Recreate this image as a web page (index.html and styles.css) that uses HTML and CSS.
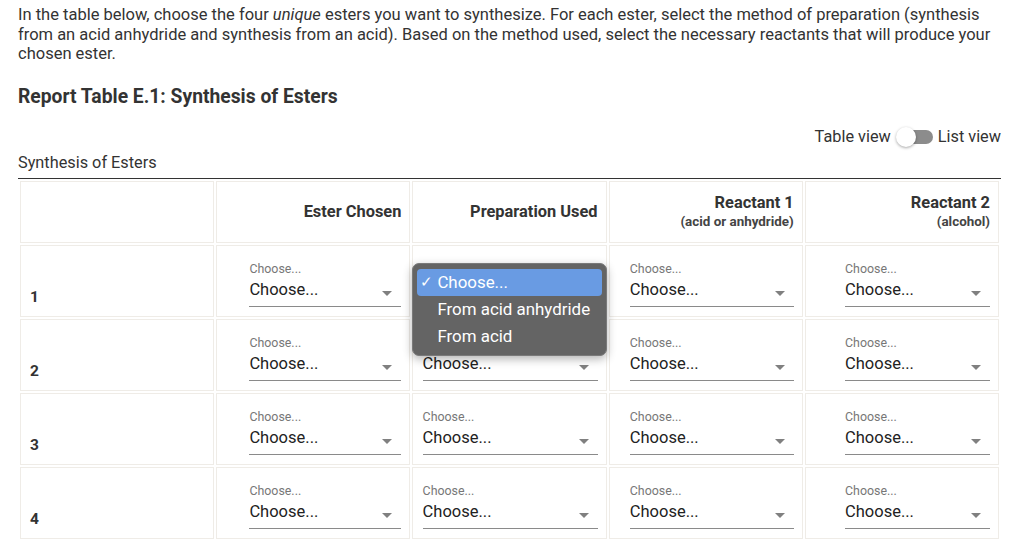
FILE: index.html
```html
<!DOCTYPE html>
<html lang="en">
<head>
    <meta charset="UTF-8">
    <meta name="viewport" content="width=device-width, initial-scale=1.0">
    <title>Synthesis of Esters</title>
    <link rel="stylesheet" href="styles.css">
</head>
<body>
    <div class="page">
        <p class="intro">
            In the table below, choose the four <em>unique</em> esters you want to synthesize. For each ester, select the method of preparation (synthesis
            from an acid anhydride and synthesis from an acid). Based on the method used, select the necessary reactants that will produce your
            chosen ester.
        </p>

        <h2 class="title">Report Table E.1: Synthesis of Esters</h2>

        <div class="view-toggle">
            <span>Table view</span>
            <span class="switch"><span class="knob"></span></span>
            <span>List view</span>
        </div>

        <div class="caption">Synthesis of Esters</div>

        <table class="esters">
            <thead>
                <tr>
                    <th></th>
                    <th>Ester Chosen</th>
                    <th>Preparation Used</th>
                    <th>Reactant 1<small>(acid or anhydride)</small></th>
                    <th>Reactant 2<small>(alcohol)</small></th>
                </tr>
            </thead>
            <tbody>
                <tr>
                    <td class="num">1</td>
                    <td><div class="pick w-ester"><span class="pick-label">Choose...</span><div class="pick-value">Choose...</div></div></td>
                    <td class="open">
                        <div class="pick w-prep"><span class="pick-label">Choose...</span><div class="pick-value">Choose...</div></div>
                        <ul class="menu">
                            <li class="active"><span class="tick">✓</span>Choose...</li>
                            <li>From acid anhydride</li>
                            <li>From acid</li>
                        </ul>
                    </td>
                    <td><div class="pick w-r1"><span class="pick-label">Choose...</span><div class="pick-value">Choose...</div></div></td>
                    <td><div class="pick w-r2"><span class="pick-label">Choose...</span><div class="pick-value">Choose...</div></div></td>
                </tr>
                <tr>
                    <td class="num">2</td>
                    <td><div class="pick w-ester"><span class="pick-label">Choose...</span><div class="pick-value">Choose...</div></div></td>
                    <td><div class="pick w-prep"><span class="pick-label">Choose...</span><div class="pick-value">Choose...</div></div></td>
                    <td><div class="pick w-r1"><span class="pick-label">Choose...</span><div class="pick-value">Choose...</div></div></td>
                    <td><div class="pick w-r2"><span class="pick-label">Choose...</span><div class="pick-value">Choose...</div></div></td>
                </tr>
                <tr>
                    <td class="num">3</td>
                    <td><div class="pick w-ester"><span class="pick-label">Choose...</span><div class="pick-value">Choose...</div></div></td>
                    <td><div class="pick w-prep"><span class="pick-label">Choose...</span><div class="pick-value">Choose...</div></div></td>
                    <td><div class="pick w-r1"><span class="pick-label">Choose...</span><div class="pick-value">Choose...</div></div></td>
                    <td><div class="pick w-r2"><span class="pick-label">Choose...</span><div class="pick-value">Choose...</div></div></td>
                </tr>
                <tr>
                    <td class="num">4</td>
                    <td><div class="pick w-ester"><span class="pick-label">Choose...</span><div class="pick-value">Choose...</div></div></td>
                    <td><div class="pick w-prep"><span class="pick-label">Choose...</span><div class="pick-value">Choose...</div></div></td>
                    <td><div class="pick w-r1"><span class="pick-label">Choose...</span><div class="pick-value">Choose...</div></div></td>
                    <td><div class="pick w-r2"><span class="pick-label">Choose...</span><div class="pick-value">Choose...</div></div></td>
                </tr>
            </tbody>
        </table>
    </div>
</body>
</html>
```

FILE: styles.css
```css
body{
    margin:0;
    background:#fff;
    color:#333;
    font-family: Roboto, "Liberation Sans", sans-serif;
}

.page{
    padding: 0 23px 0 18px;
}

.intro{
    margin: 5px 0 0;
    font-size:16.5px;
    line-height:19.5px;
}

.title{
    margin: 21px 0 0;
    font-size:19.3px;
    line-height:24px;
    font-weight:bold;
}

/* toggle */
.view-toggle{
    display:flex;
    justify-content:flex-end;
    align-items:center;
    gap:4px;
    margin-top:18px;
    font-size:16.3px;
    line-height:20px;
}

.switch{
    position:relative;
    width:36px;
    height:14px;
    margin: 0 1px 0 2px;
    border-radius:7px;
    background:#8c8c8c;
}

.switch .knob{
    position:absolute;
    left:-1px;
    top:-3px;
    width:20px;
    height:20px;
    border-radius:50%;
    background:#fff;
    box-shadow:0 1px 3px rgba(0,0,0,0.35);
}

.caption{
    margin-top:6px;
    padding-bottom:6px;
    font-size:16.3px;
    line-height:19px;
    border-bottom:1px solid #333;
}

/* table */
.esters{
    width:100%;
    border-collapse:separate;
    border-spacing:2px;
    table-layout:fixed;
}

.esters th, .esters td{
    border:1px solid #efece7;
    padding:0 8px 9px;
    text-align:right;
    vertical-align:bottom;
}

.esters th{
    height:60px;
    padding:0 8px;
    vertical-align:middle;
    font-size:16.4px;
    line-height:20px;
    font-weight:bold;
}

.esters th small{
    display:block;
    font-size:13.4px;
    line-height:18px;
    font-weight:bold;
    color:#444;
}

.esters td{
    height:61px;
    box-sizing:border-box;
}

.esters tbody tr{
    height:72px;
}

.esters td.num{
    text-align:left;
    padding-left:9px;
    padding-bottom:10px;
    font-size:15.5px;
    font-weight:bold;
    line-height:18px;
}

/* select look */
.pick{
    display:inline-block;
    text-align:left;
}

.w-ester{ width:152px; }
.w-prep{ width:175px; }
.w-r1{ width:164px; }
.w-r2{ width:145px; }

.pick-label{
    display:block;
    font-size:12.4px;
    line-height:14px;
    color:#777;
}

.pick-value{
    position:relative;
    padding:4px 0 6px;
    font-size:16.5px;
    line-height:20px;
    color:#222;
    border-bottom:1px solid #8a8a8a;
}

.pick-value::after{
    content:"";
    position:absolute;
    right:9px;
    top:15px;
    border-left:5px solid transparent;
    border-right:5px solid transparent;
    border-top:5px solid #808080;
}

/* open dropdown */
.open{
    position:relative;
}

.menu{
    position:absolute;
    left:-1px;
    top:17px;
    width:185px;
    margin:0;
    padding:5px 4px;
    list-style:none;
    background:#646464;
    border:1px solid #7a7a7a;
    border-radius:7px;
    box-shadow:0 3px 10px rgba(0,0,0,0.3);
    text-align:left;
    z-index:2;
}

.menu li{
    height:27px;
    padding-left:20px;
    position:relative;
    font-size:16.9px;
    line-height:27px;
    color:#fff;
    border-radius:4px;
}

.menu li.active{
    background:#699be3;
}

.menu .tick{
    position:absolute;
    left:3px;
    top:0;
    font-size:15px;
}
```
